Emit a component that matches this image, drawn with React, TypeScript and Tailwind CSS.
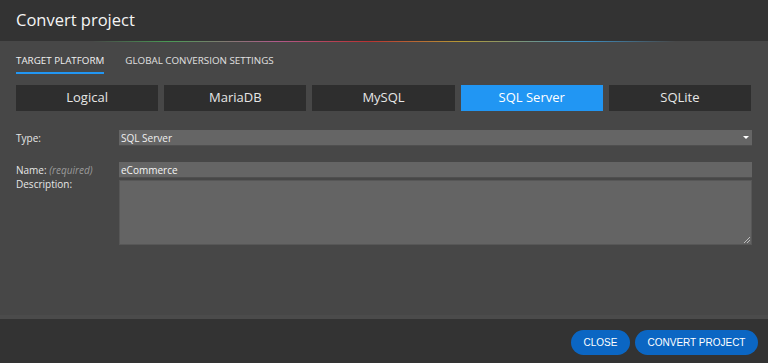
import React from "react";

const platforms = ["Logical", "MariaDB", "MySQL", "SQL Server", "SQLite"];

export default function App() {
  return (
    <div
      className="w-[768px] h-[363px] flex flex-col bg-[#474747] overflow-hidden"
      style={{ fontFamily: '"Open Sans", "Noto Sans", sans-serif' }}
    >
      <div className="h-[41px] bg-[#333333] flex items-center px-4 shrink-0">
        <span className="text-[16.5px] text-[#f5f5f5] leading-none">Convert project</span>
      </div>
      <div
        className="h-px shrink-0"
        style={{
          background:
            "linear-gradient(90deg, rgba(51,51,51,0) 12%, #4a9a55 22%, #b05a8a 36%, #b83232 48%, #b59a35 60%, #3e8fc2 76%, rgba(71,71,71,0) 88%)",
        }}
      />
      <div className="flex-1 flex flex-col px-4">
        <div className="flex gap-[21px] pt-[12px]">
          <div className="flex flex-col">
            <span className="text-[9.8px] text-[#f0f0f0] leading-[14px]">TARGET PLATFORM</span>
            <div className="h-[2px] bg-[#2196f3] mt-[4px]" />
          </div>
          <span className="text-[9.8px] text-[#e0e0e0] leading-[14px]">GLOBAL CONVERSION SETTINGS</span>
        </div>
        <div className="flex gap-[6px] mt-[11px] pr-[1px]">
          {platforms.map((p) => (
            <div
              key={p}
              className={`flex-1 h-[26px] flex items-center justify-center text-[13px] ${
                p === "SQL Server" ? "bg-[#2196f3] text-white" : "bg-[#2e2e2e] text-[#e6e6e6]"
              }`}
            >
              {p}
            </div>
          ))}
        </div>
        <div className="flex mt-[19px] items-center">
          <span className="w-[103px] text-[10px] text-[#e6e6e6]">Type:</span>
          <div className="flex-1 h-[16px] bg-[#656565] border-b border-[#4f4f4f] flex items-center justify-between px-[2px]">
            <span className="text-[10px] text-[#f0f0f0] leading-none">SQL Server</span>
            <svg width="6" height="5" viewBox="0 0 6 5" className="mr-[1px]">
              <path d="M0 1 H6 L3 4 Z" fill="#ffffff" />
            </svg>
          </div>
        </div>
        <div className="flex mt-[16px]">
          <div className="w-[103px] flex flex-col gap-[1px] pt-[2px]">
            <span className="text-[10px] text-[#e6e6e6] leading-[13px]">
              Name: <span className="italic text-[#9a9a9a]">(required)</span>
            </span>
            <span className="text-[10px] text-[#e6e6e6] leading-[13px]">Description:</span>
          </div>
          <div className="flex-1 flex flex-col gap-[2px]">
            <div className="h-[16px] bg-[#656565] border-b border-[#4f4f4f] flex items-center px-[2px]">
              <span className="text-[10px] text-[#f5f5f5] leading-none">eCommerce</span>
            </div>
            <div className="h-[65px] bg-[#646464] border border-[#575757] relative">
              <svg width="8" height="8" viewBox="0 0 8 8" className="absolute right-0 bottom-0">
                <path d="M7 1 L1 7 M7 4 L4 7" stroke="#bdbdbd" strokeWidth="1" />
              </svg>
            </div>
          </div>
        </div>
      </div>
      <div className="h-[4px] bg-[#4b4b4b] shrink-0" />
      <div className="h-[44px] bg-[#333333] shrink-0 flex items-center justify-end gap-[5px] pr-[10px] pt-[2px]">
        <div
          className="h-[25px] w-[59px] rounded-full bg-[#0b66c3] flex items-center justify-center text-[10px] text-white"
          style={{ fontFamily: '"Liberation Sans", Arial, sans-serif' }}
        >
          CLOSE
        </div>
        <div
          className="h-[25px] w-[123px] rounded-full bg-[#0b66c3] flex items-center justify-center text-[10px] text-white"
          style={{ fontFamily: '"Liberation Sans", Arial, sans-serif' }}
        >
          CONVERT PROJECT
        </div>
      </div>
    </div>
  );
}
